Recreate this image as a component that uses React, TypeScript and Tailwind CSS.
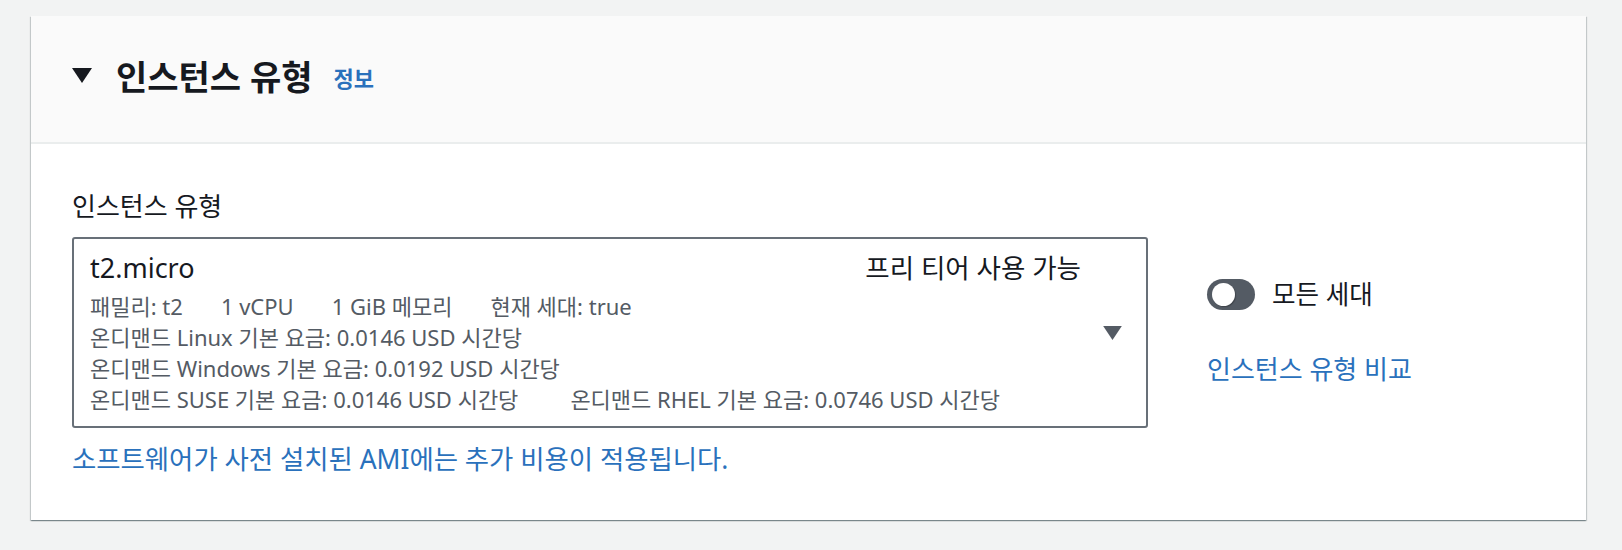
import React from "react";

const FONT = { fontFamily: '"Noto Sans", "Noto Sans CJK KR", sans-serif' };

function CaretDown({ className }: { className?: string }) {
  return (
    <svg viewBox="0 0 20 15" className={className} fill="currentColor">
      <path d="M0 0 H20 L10 15 Z" />
    </svg>
  );
}

function Toggle() {
  return (
    <div className="flex h-[31px] w-[48px] items-center rounded-full bg-[#545b64] px-[5px]">
      <div className="h-[23px] w-[23px] rounded-full bg-white shadow-[1px_1px_1px_rgba(0,0,0,0.25)]" />
    </div>
  );
}

const tags = ["패밀리: t2", "1 vCPU", "1 GiB 메모리", "현재 세대: true"];

export default function App() {
  return (
    <div className="min-h-[550px] bg-[#f2f3f3] pl-[31px] pr-[36px] pt-[16px]" style={FONT}>
      <div className="bg-white shadow-[0_1px_1px_0_rgba(0,28,36,0.3),1px_1px_1px_0_rgba(0,28,36,0.15),-1px_1px_1px_0_rgba(0,28,36,0.15)]">
        {/* Header */}
        <div className="flex h-[128px] items-center border-b-2 border-[#eaeded] bg-[#fafafa] pb-[5px] pl-[41px]">
          <CaretDown className="mb-[2px] h-[15px] w-[20px] text-[#16191f]" />
          <h2 className="ml-[24px] text-[34px] font-bold leading-none text-[#16191f]">인스턴스 유형</h2>
          <span className="ml-[21px] mt-[3px] text-[22px] font-bold text-[#2a71bc]">정보</span>
        </div>

        {/* Body */}
        <div className="px-[41px] pb-[44px] pt-[46px]">
          <div className="text-[26px] leading-[32px] text-[#16191f]">인스턴스 유형</div>
          <div className="mt-[15px] flex items-start">
            <div className="flex h-[191px] w-[1076px] items-center rounded-[3px] border-2 border-[#687078] pl-[16px] pr-[24px]">
              <div className="flex-1 self-start pt-[10px]">
                <div className="flex items-center justify-between pr-[22px] leading-[38px] text-[#16191f]">
                  <span className="text-[27px]">t2.micro</span>
                  <span className="text-[26.5px]">프리 티어 사용 가능</span>
                </div>
                <div className="mt-[4px] text-[22px] leading-[31px] text-[#545b64]">
                  <div className="flex gap-x-[38px]">
                    {tags.map((t) => (
                      <span key={t}>{t}</span>
                    ))}
                  </div>
                  <div>온디맨드 Linux 기본 요금: 0.0146 USD 시간당</div>
                  <div>온디맨드 Windows 기본 요금: 0.0192 USD 시간당</div>
                  <div className="flex gap-x-[52px]">
                    <span>온디맨드 SUSE 기본 요금: 0.0146 USD 시간당</span>
                    <span>온디맨드 RHEL 기본 요금: 0.0746 USD 시간당</span>
                  </div>
                </div>
              </div>
              <CaretDown className="h-[14px] w-[19px] text-[#545b64]" />
            </div>

            <div className="ml-[59px] pt-[38px]">
              <div className="flex items-center gap-[17px]">
                <Toggle />
                <span className="text-[25.6px] leading-[39px] text-[#16191f]">모든 세대</span>
              </div>
              <div className="mt-[36px] text-[26px] leading-[39px] text-[#2a71bc]">인스턴스 유형 비교</div>
            </div>
          </div>
          <div className="mt-[14px] text-[26.4px] leading-[34px] text-[#2a71bc]">
            소프트웨어가 사전 설치된 AMI에는 추가 비용이 적용됩니다.
          </div>
        </div>
      </div>
    </div>
  );
}
